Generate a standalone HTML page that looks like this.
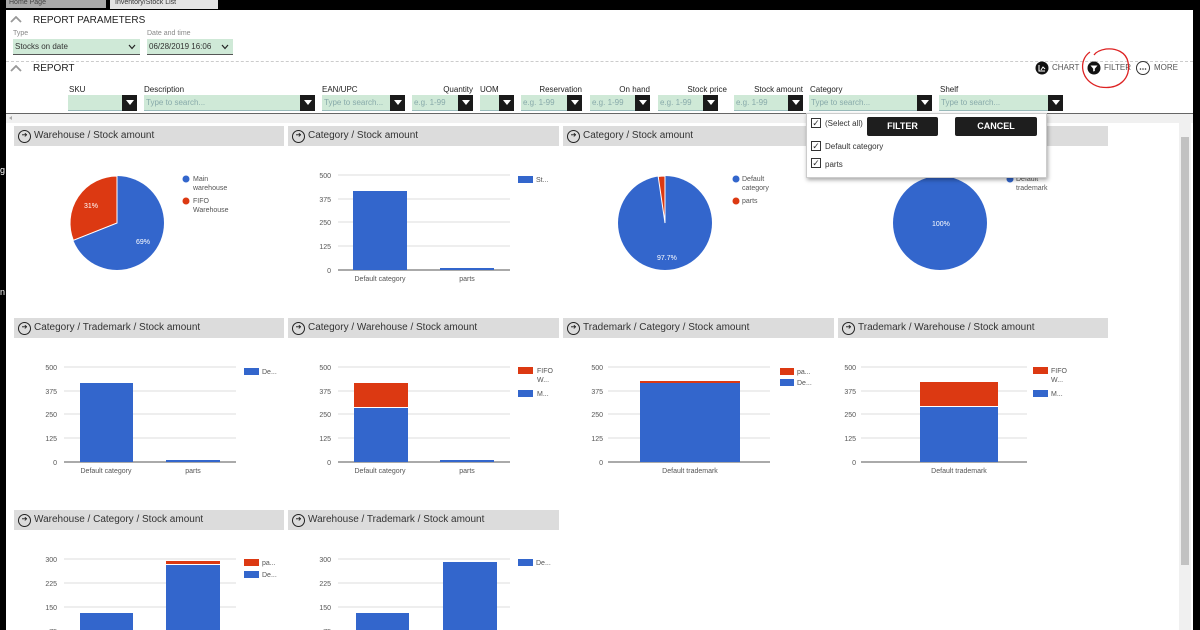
<!DOCTYPE html>
<html><head><meta charset="utf-8"><style>
*{margin:0;padding:0;box-sizing:border-box}
body{width:1200px;height:630px;overflow:hidden;background:#fff;font-family:"Liberation Sans",sans-serif;color:#333;position:relative}
.a{position:absolute}
.lbl{position:absolute;font-size:8px;color:#222;top:85px}
.inp{position:absolute;top:95px;height:16px;background:#cfe9d7;font-size:8px;color:#8aa;padding:3px 2px;border-bottom:1px solid #9bb}
.fb{position:absolute;right:0;top:0;width:15px;height:16px;background:#1a1a1a}
.fb:after{content:"";position:absolute;left:4px;top:5px;border-left:4px solid transparent;border-right:4px solid transparent;border-top:5px solid #fff}
.ph{position:absolute;height:20px;background:#dcdcdc;font-size:10px;color:#333;line-height:20px;padding-left:20px}
.ph:before{content:"➔";position:absolute;left:4px;top:4px;width:11px;height:11px;border:1px solid #222;border-radius:50%;font-size:7px;line-height:10px;text-align:center;color:#111}
svg text{font-family:"Liberation Sans",sans-serif;font-size:7px;fill:#555}
</style></head><body>
<div class="a" style="left:0;top:0;width:1200px;height:10px;background:#000"></div>
<div class="a" style="left:6px;top:0;width:100px;height:8px;background:#a9a9a9;font-size:7px;color:#444;line-height:6px;padding-left:3px;overflow:hidden">Home Page</div>
<div class="a" style="left:110px;top:0;width:108px;height:9px;background:#e4e4e4;font-size:7px;color:#333;line-height:6px;padding-left:5px;overflow:hidden">Inventory/Stock List</div>
<div class="a" style="left:0;top:0;width:6px;height:630px;background:#000"></div>
<div class="a" style="left:0;top:165px;color:#fff;font-size:9px">g</div>
<div class="a" style="left:0;top:287px;color:#fff;font-size:9px">n</div>
<div class="a" style="left:1193px;top:0;width:7px;height:630px;background:#000"></div>

<svg class="a" style="left:10px;top:16px" width="12" height="8"><path d="M1 6 L6 1 L11 6" fill="none" stroke="#999" stroke-width="1.8"/></svg>
<div class="a" style="left:33px;top:15px;font-size:10px;color:#222">REPORT PARAMETERS</div>
<div class="a" style="left:13px;top:30px;font-size:7px;color:#888">Type</div>
<div class="a" style="left:13px;top:39px;width:127px;height:16px;background:#cfe9d7;font-size:8px;padding:3px 2px;border-bottom:1px solid #555">Stocks on date<svg class="a" style="right:4px;top:5px" width="8" height="6"><path d="M1 1 L4 4.5 L7 1" fill="none" stroke="#222" stroke-width="1.2"/></svg></div>
<div class="a" style="left:147px;top:30px;font-size:7px;color:#888">Date and time</div>
<div class="a" style="left:147px;top:39px;width:86px;height:16px;background:#cfe9d7;font-size:8px;padding:3px 2px;border-bottom:1px solid #555">06/28/2019 16:06<svg class="a" style="right:4px;top:5px" width="8" height="6"><path d="M1 1 L4 4.5 L7 1" fill="none" stroke="#222" stroke-width="1.2"/></svg></div>
<div class="a" style="left:6px;top:61px;width:1187px;border-top:1px dashed #ccc"></div>
<svg class="a" style="left:10px;top:65px" width="12" height="8"><path d="M1 6 L6 1 L11 6" fill="none" stroke="#999" stroke-width="1.8"/></svg>
<div class="a" style="left:33px;top:63px;font-size:10px;color:#222">REPORT</div>

<svg class="a" style="left:1034px;top:60px" width="150" height="16">
<circle cx="8" cy="8" r="6.5" fill="#111"/><path d="M5 5 V11 H11 M7 10 L9 7 L11 9" fill="none" stroke="#fff" stroke-width="1"/>
<circle cx="60" cy="8" r="6.5" fill="#111"/><path d="M56.5 5.5 H63.5 L60.8 8.8 V11 L59.2 11.5 V8.8 Z" fill="#fff"/>
<circle cx="109" cy="8" r="6.5" fill="none" stroke="#333" stroke-width="1"/><circle cx="106.5" cy="9" r=".8" fill="#333"/><circle cx="109" cy="9" r=".8" fill="#333"/><circle cx="111.5" cy="9" r=".8" fill="#333"/>
</svg>
<div class="a" style="left:1052px;top:63px;font-size:8px;color:#555">CHART</div>
<div class="a" style="left:1104px;top:63px;font-size:8px;color:#555">FILTER</div>
<div class="a" style="left:1154px;top:63px;font-size:8px;color:#555">MORE</div>
<svg class="a" style="left:1076px;top:46px" width="60" height="48"><path d="M14 6 C 2 14, 4 36, 24 41 C 44 44, 55 32, 52 16 C 50 6, 40 2, 30 3 C 24 4, 20 6, 18 9" fill="none" stroke="#d22" stroke-width="1.3"/></svg>

<div class="lbl" style="left:69px">SKU</div>
<div class="inp" style="left:68px;width:69px"><div class="fb"></div></div>
<div class="lbl" style="left:144px">Description</div>
<div class="inp" style="left:144px;width:171px">Type to search...<div class="fb"></div></div>
<div class="lbl" style="left:322px">EAN/UPC</div>
<div class="inp" style="left:322px;width:83px">Type to search...<div class="fb"></div></div>
<div class="lbl" style="left:412px;width:61px;text-align:right">Quantity</div>
<div class="inp" style="left:412px;width:61px">e.g. 1-99<div class="fb"></div></div>
<div class="lbl" style="left:480px">UOM</div>
<div class="inp" style="left:480px;width:34px"><div class="fb"></div></div>
<div class="lbl" style="left:521px;width:61px;text-align:right">Reservation</div>
<div class="inp" style="left:521px;width:61px">e.g. 1-99<div class="fb"></div></div>
<div class="lbl" style="left:590px;width:60px;text-align:right">On hand</div>
<div class="inp" style="left:590px;width:60px">e.g. 1-99<div class="fb"></div></div>
<div class="lbl" style="left:658px;width:69px;text-align:right">Stock price</div>
<div class="inp" style="left:658px;width:60px">e.g. 1-99<div class="fb"></div></div>
<div class="lbl" style="left:734px;width:69px;text-align:right">Stock amount</div>
<div class="inp" style="left:734px;width:69px">e.g. 1-99<div class="fb"></div></div>
<div class="lbl" style="left:810px">Category</div>
<div class="inp" style="left:809px;width:123px">Type to search...<div class="fb"></div></div>
<div class="lbl" style="left:940px">Shelf</div>
<div class="inp" style="left:939px;width:124px">Type to search...<div class="fb"></div></div>
<div class="a" style="left:6px;top:113px;width:1187px;border-top:1px solid #666"></div>
<div class="a" style="left:6px;top:114px;width:1187px;height:9px;background:#f0f0f0"></div>
<div class="a" style="left:9px;top:116px;border-top:2.5px solid transparent;border-bottom:2.5px solid transparent;border-right:3px solid #aaa"></div>
<div class="a" style="left:1179px;top:123px;width:12px;height:507px;background:#f0f0f0"></div>
<div class="a" style="left:1181px;top:137px;width:8px;height:428px;background:#c2c2c2"></div>

<div class="ph" style="left:14px;top:126px;width:270px">Warehouse / Stock amount</div>
<div class="ph" style="left:288px;top:126px;width:271px">Category / Stock amount</div>
<div class="ph" style="left:563px;top:126px;width:271px">Category / Stock amount</div>
<div class="ph" style="left:838px;top:126px;width:270px"></div>
<div class="ph" style="left:14px;top:318px;width:270px">Category / Trademark / Stock amount</div>
<div class="ph" style="left:288px;top:318px;width:271px">Category / Warehouse / Stock amount</div>
<div class="ph" style="left:563px;top:318px;width:271px">Trademark / Category / Stock amount</div>
<div class="ph" style="left:838px;top:318px;width:270px">Trademark / Warehouse / Stock amount</div>
<div class="ph" style="left:14px;top:510px;width:270px">Warehouse / Category / Stock amount</div>
<div class="ph" style="left:288px;top:510px;width:271px">Warehouse / Trademark / Stock amount</div>

<svg class="a" style="left:14px;top:126px" width="270" height="180">
<circle cx="103" cy="97" r="47" fill="#3366cc"/>
<path d="M103 97 L59.3 114.3 A47 47 0 0 1 103 50 Z" fill="#dc3912" stroke="#fff" stroke-width="1"/>
<text x="70" y="82" style="fill:#fff">31%</text><text x="122" y="118" style="fill:#fff">69%</text>
<circle cx="172" cy="53" r="3.5" fill="#3366cc"/><text x="179" y="55">Main</text><text x="179" y="64">warehouse</text>
<circle cx="172" cy="75" r="3.5" fill="#dc3912"/><text x="179" y="77">FIFO</text><text x="179" y="86">Warehouse</text>
</svg>
<svg class="a" style="left:288px;top:126px" width="271" height="180">
<g stroke="#ddd"><line x1="50" x2="222" y1="49" y2="49"/><line x1="50" x2="222" y1="73" y2="73"/><line x1="50" x2="222" y1="96" y2="96"/><line x1="50" x2="222" y1="120" y2="120"/></g>
<line x1="50" x2="222" y1="144" y2="144" stroke="#555"/>
<text x="43" y="52" text-anchor="end">500</text><text x="43" y="76" text-anchor="end">375</text><text x="43" y="99" text-anchor="end">250</text><text x="43" y="123" text-anchor="end">125</text><text x="43" y="147" text-anchor="end">0</text>
<rect x="65" y="65" width="54" height="79" fill="#3366cc"/><rect x="152" y="142" width="54" height="2" fill="#3366cc"/>
<text x="92" y="155" text-anchor="middle">Default category</text><text x="179" y="155" text-anchor="middle">parts</text>
<rect x="230" y="50" width="15" height="7" fill="#3366cc"/><text x="248" y="56">St...</text>
</svg>
<svg class="a" style="left:563px;top:126px" width="271" height="180">
<circle cx="102" cy="97" r="47" fill="#3366cc"/>
<path d="M102 97 L95.2 50.5 A47 47 0 0 1 102 50 Z" fill="#dc3912" stroke="#fff" stroke-width="1"/>
<text x="94" y="134" style="fill:#fff">97.7%</text>
<circle cx="173" cy="53" r="3.5" fill="#3366cc"/><text x="179" y="55">Default</text><text x="179" y="64">category</text>
<circle cx="173" cy="75" r="3.5" fill="#dc3912"/><text x="179" y="77">parts</text>
</svg>
<svg class="a" style="left:838px;top:126px" width="270" height="180">
<circle cx="102" cy="97" r="47" fill="#3366cc"/>
<text x="94" y="100" style="fill:#fff">100%</text>
<circle cx="172" cy="53" r="3.5" fill="#3366cc"/><text x="178" y="55">Default</text><text x="178" y="64">trademark</text>
</svg>

<svg class="a" style="left:14px;top:318px" width="270" height="180">
<g stroke="#ddd"><line x1="50" x2="222" y1="49" y2="49"/><line x1="50" x2="222" y1="73" y2="73"/><line x1="50" x2="222" y1="96" y2="96"/><line x1="50" x2="222" y1="120" y2="120"/></g>
<line x1="50" x2="222" y1="144" y2="144" stroke="#555"/>
<text x="43" y="52" text-anchor="end">500</text><text x="43" y="76" text-anchor="end">375</text><text x="43" y="99" text-anchor="end">250</text><text x="43" y="123" text-anchor="end">125</text><text x="43" y="147" text-anchor="end">0</text>
<rect x="66" y="65" width="53" height="79" fill="#3366cc"/><rect x="152" y="142" width="54" height="2" fill="#3366cc"/>
<text x="92" y="155" text-anchor="middle">Default category</text><text x="179" y="155" text-anchor="middle">parts</text>
<rect x="230" y="50" width="15" height="7" fill="#3366cc"/><text x="248" y="56">De...</text>
</svg>
<svg class="a" style="left:288px;top:318px" width="271" height="180">
<g stroke="#ddd"><line x1="50" x2="222" y1="49" y2="49"/><line x1="50" x2="222" y1="73" y2="73"/><line x1="50" x2="222" y1="96" y2="96"/><line x1="50" x2="222" y1="120" y2="120"/></g>
<line x1="50" x2="222" y1="144" y2="144" stroke="#555"/>
<text x="43" y="52" text-anchor="end">500</text><text x="43" y="76" text-anchor="end">375</text><text x="43" y="99" text-anchor="end">250</text><text x="43" y="123" text-anchor="end">125</text><text x="43" y="147" text-anchor="end">0</text>
<rect x="66" y="65" width="54" height="24" fill="#dc3912"/><rect x="66" y="90" width="54" height="54" fill="#3366cc"/><rect x="152" y="142" width="54" height="2" fill="#3366cc"/>
<text x="92" y="155" text-anchor="middle">Default category</text><text x="179" y="155" text-anchor="middle">parts</text>
<rect x="230" y="49" width="15" height="7" fill="#dc3912"/><text x="249" y="55">FIFO</text><text x="249" y="64">W...</text>
<rect x="230" y="72" width="15" height="7" fill="#3366cc"/><text x="249" y="78">M...</text>
</svg>
<svg class="a" style="left:563px;top:318px" width="271" height="180">
<g stroke="#ddd"><line x1="45" x2="207" y1="49" y2="49"/><line x1="45" x2="207" y1="73" y2="73"/><line x1="45" x2="207" y1="96" y2="96"/><line x1="45" x2="207" y1="120" y2="120"/></g>
<line x1="45" x2="207" y1="144" y2="144" stroke="#555"/>
<text x="40" y="52" text-anchor="end">500</text><text x="40" y="76" text-anchor="end">375</text><text x="40" y="99" text-anchor="end">250</text><text x="40" y="123" text-anchor="end">125</text><text x="40" y="147" text-anchor="end">0</text>
<rect x="77" y="63" width="100" height="2" fill="#dc3912"/><rect x="77" y="65" width="100" height="79" fill="#3366cc"/>
<text x="127" y="155" text-anchor="middle">Default trademark</text>
<rect x="217" y="50" width="14" height="7" fill="#dc3912"/><text x="234" y="56">pa...</text>
<rect x="217" y="61" width="14" height="7" fill="#3366cc"/><text x="234" y="67">De...</text>
</svg>
<svg class="a" style="left:838px;top:318px" width="270" height="180">
<g stroke="#ddd"><line x1="23" x2="189" y1="49" y2="49"/><line x1="23" x2="189" y1="73" y2="73"/><line x1="23" x2="189" y1="96" y2="96"/><line x1="23" x2="189" y1="120" y2="120"/></g>
<line x1="23" x2="189" y1="144" y2="144" stroke="#555"/>
<text x="18" y="52" text-anchor="end">500</text><text x="18" y="76" text-anchor="end">375</text><text x="18" y="99" text-anchor="end">250</text><text x="18" y="123" text-anchor="end">125</text><text x="18" y="147" text-anchor="end">0</text>
<rect x="82" y="64" width="78" height="24" fill="#dc3912"/><rect x="82" y="89" width="78" height="55" fill="#3366cc"/>
<text x="121" y="155" text-anchor="middle">Default trademark</text>
<rect x="195" y="49" width="15" height="7" fill="#dc3912"/><text x="213" y="55">FIFO</text><text x="213" y="64">W...</text>
<rect x="195" y="72" width="15" height="7" fill="#3366cc"/><text x="213" y="78">M...</text>
</svg>

<svg class="a" style="left:14px;top:510px" width="270" height="120">
<g stroke="#ddd"><line x1="50" x2="222" y1="49" y2="49"/><line x1="50" x2="222" y1="73" y2="73"/><line x1="50" x2="222" y1="97" y2="97"/><line x1="50" x2="222" y1="121" y2="121"/></g>
<text x="43" y="52" text-anchor="end">300</text><text x="43" y="76" text-anchor="end">225</text><text x="43" y="100" text-anchor="end">150</text><text x="43" y="124" text-anchor="end">75</text>
<rect x="66" y="103" width="53" height="30" fill="#3366cc"/>
<rect x="152" y="51" width="54" height="3" fill="#dc3912"/><rect x="152" y="55" width="54" height="80" fill="#3366cc"/>
<rect x="230" y="49" width="15" height="7" fill="#dc3912"/><text x="248" y="55">pa...</text>
<rect x="230" y="61" width="15" height="7" fill="#3366cc"/><text x="248" y="67">De...</text>
</svg>
<svg class="a" style="left:288px;top:510px" width="271" height="120">
<g stroke="#ddd"><line x1="50" x2="222" y1="49" y2="49"/><line x1="50" x2="222" y1="73" y2="73"/><line x1="50" x2="222" y1="97" y2="97"/><line x1="50" x2="222" y1="121" y2="121"/></g>
<text x="43" y="52" text-anchor="end">300</text><text x="43" y="76" text-anchor="end">225</text><text x="43" y="100" text-anchor="end">150</text><text x="43" y="124" text-anchor="end">75</text>
<rect x="68" y="103" width="53" height="30" fill="#3366cc"/>
<rect x="155" y="52" width="54" height="80" fill="#3366cc"/>
<rect x="230" y="49" width="15" height="7" fill="#3366cc"/><text x="248" y="55">De...</text>
</svg>

<div class="a" style="left:806px;top:113px;width:241px;height:65px;background:#fff;box-shadow:1px 2px 4px rgba(0,0,0,.35);border:1px solid #ccc">
 <div class="a" style="left:4px;top:4px;width:10px;height:10px;border:1px solid #333;font-size:9px;line-height:8px;text-align:center">✓</div>
 <div class="a" style="left:18px;top:5px;font-size:8px">(Select all)</div>
 <div class="a" style="left:60px;top:3px;width:71px;height:19px;background:#1e1e1e;color:#fff;font-size:9px;font-weight:bold;text-align:center;line-height:19px;border-radius:2px">FILTER</div>
 <div class="a" style="left:148px;top:3px;width:82px;height:19px;background:#1e1e1e;color:#fff;font-size:9px;font-weight:bold;text-align:center;line-height:19px;border-radius:2px">CANCEL</div>
 <div class="a" style="left:4px;top:27px;width:10px;height:10px;border:1px solid #333;font-size:9px;line-height:8px;text-align:center">✓</div>
 <div class="a" style="left:18px;top:28px;font-size:8px">Default category</div>
 <div class="a" style="left:4px;top:44px;width:10px;height:10px;border:1px solid #333;font-size:9px;line-height:8px;text-align:center">✓</div>
 <div class="a" style="left:18px;top:46px;font-size:8px">parts</div>
</div>
</body></html>
